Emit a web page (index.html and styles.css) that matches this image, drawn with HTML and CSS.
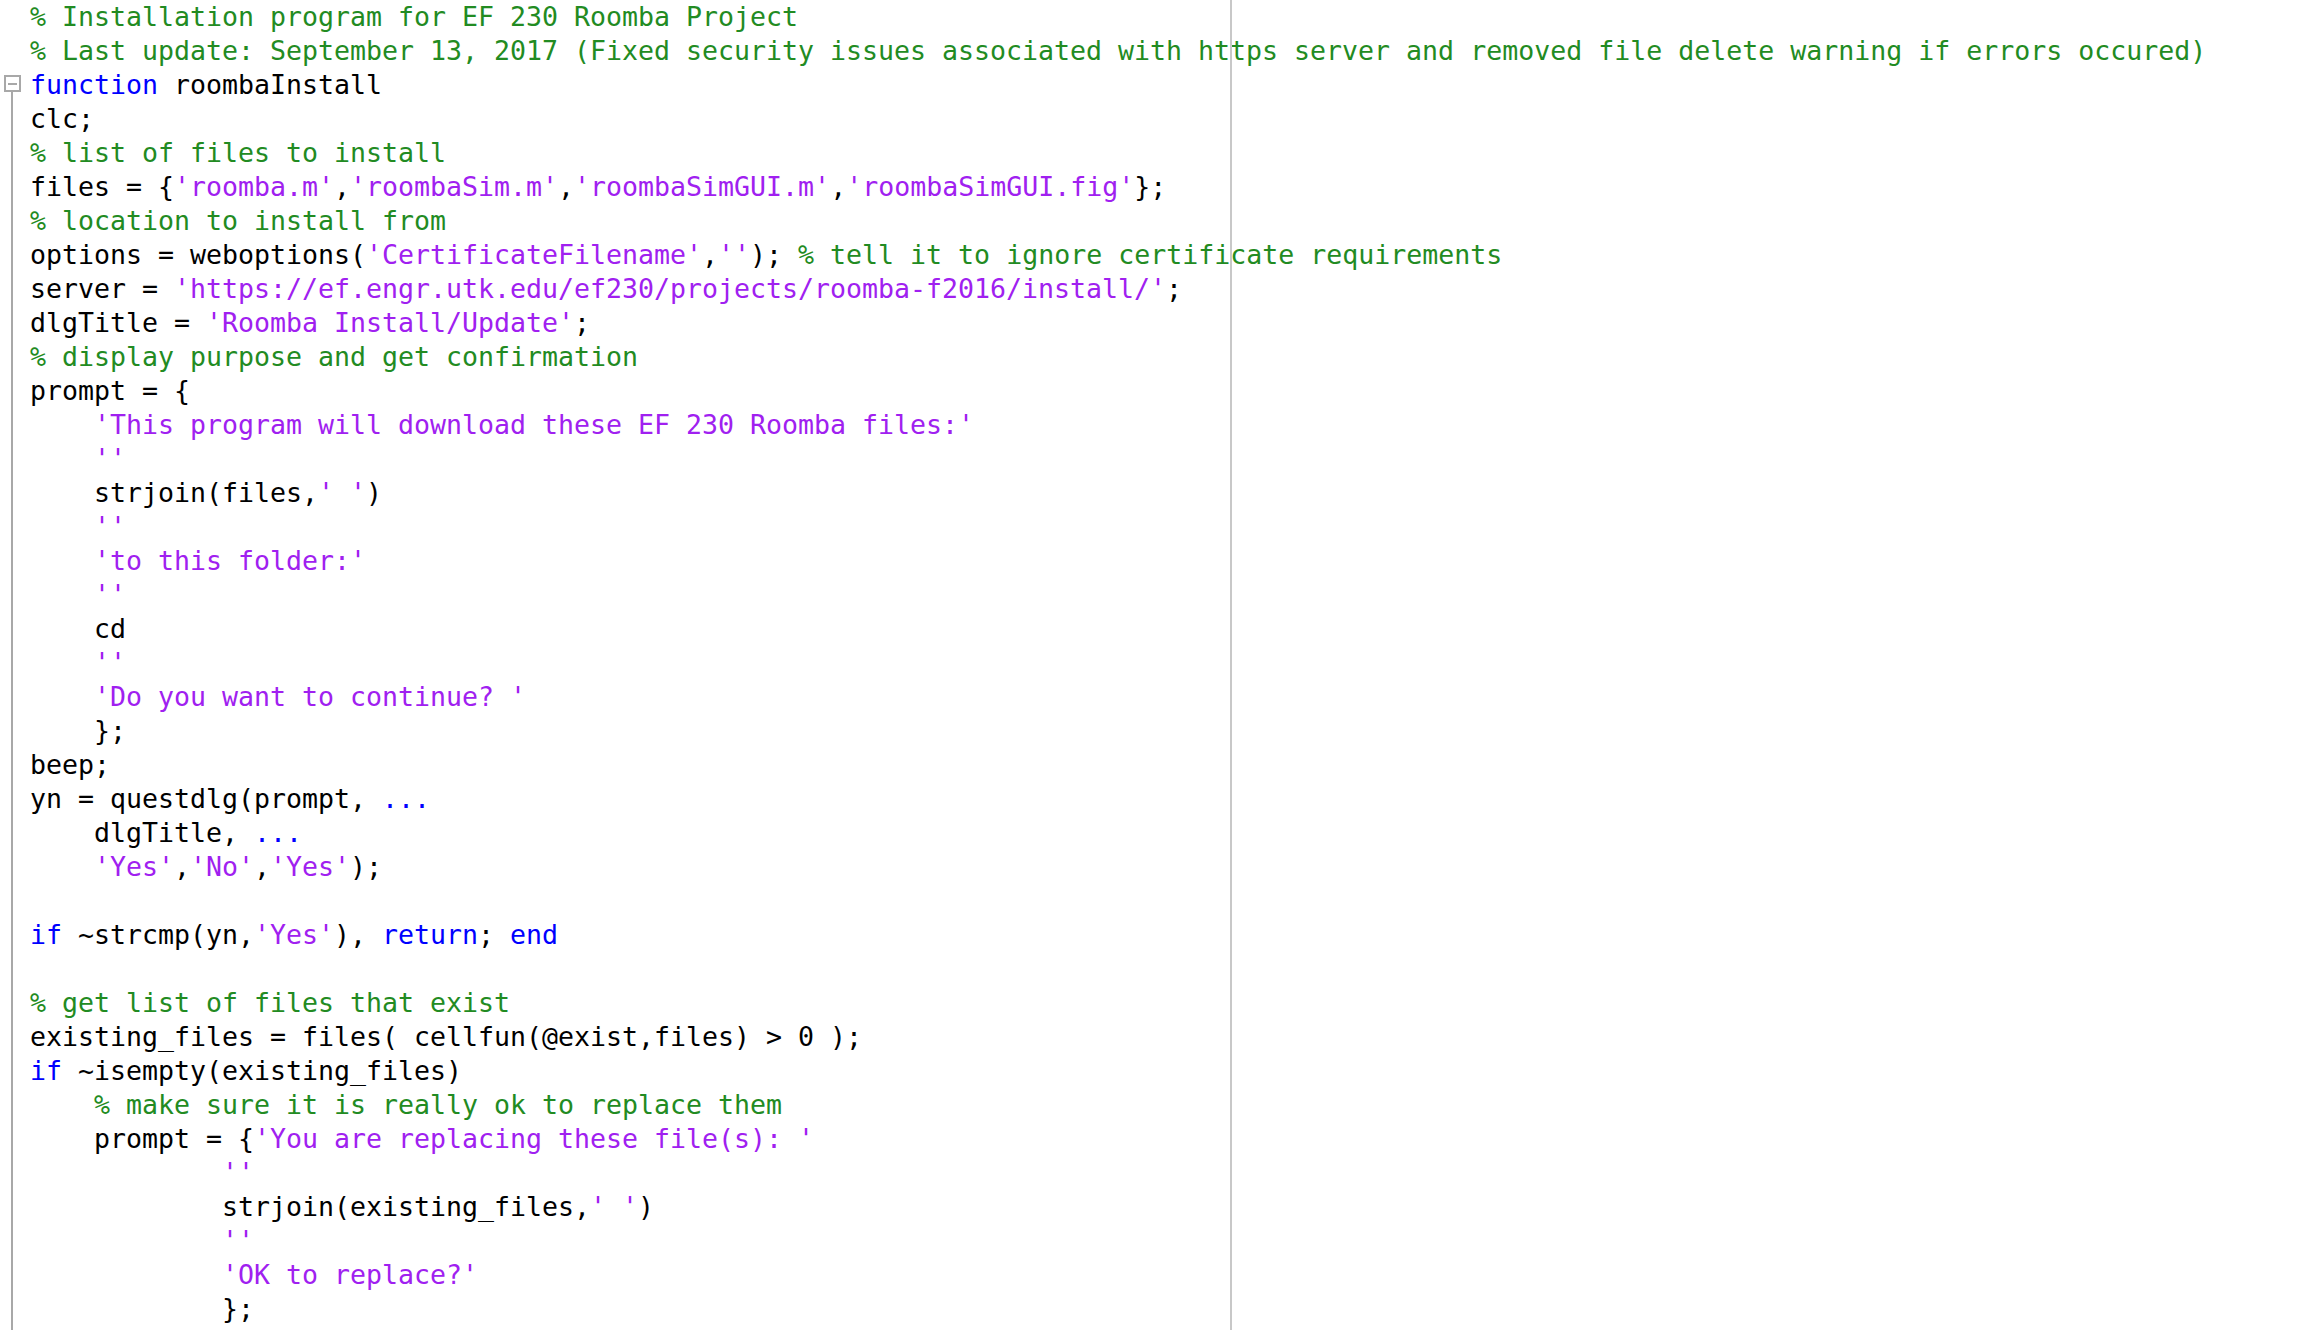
FILE: index.html
```html
<!DOCTYPE html>
<html lang="en">
<head>
<meta charset="utf-8">
<title>roombaInstall.m</title>
<link rel="stylesheet" href="styles.css">
</head>
<body>
<div class="editor">
  <div class="gutter">
    <div class="gutter-spacer"></div>
    <div class="fold-box"><div class="fold-minus"></div></div>
    <div class="fold-line"></div>
  </div>
  <div class="code">
<div class="ln"><span class="c">% Installation program for EF 230 Roomba Project</span></div>
<div class="ln"><span class="c">% Last update: September 13, 2017 (Fixed security issues associated with https server and removed file delete warning if errors occured)</span></div>
<div class="ln"><span class="k">function</span> roombaInstall</div>
<div class="ln">clc;</div>
<div class="ln"><span class="c">% list of files to install</span></div>
<div class="ln">files = {<span class="s">'roomba.m'</span>,<span class="s">'roombaSim.m'</span>,<span class="s">'roombaSimGUI.m'</span>,<span class="s">'roombaSimGUI.fig'</span>};</div>
<div class="ln"><span class="c">% location to install from</span></div>
<div class="ln">options = weboptions(<span class="s">'CertificateFilename'</span>,<span class="s">''</span>); <span class="c">% tell it to ignore certificate requirements</span></div>
<div class="ln">server = <span class="s">'https://ef.engr.utk.edu/ef230/projects/roomba-f2016/install/'</span>;</div>
<div class="ln">dlgTitle = <span class="s">'Roomba Install/Update'</span>;</div>
<div class="ln"><span class="c">% display purpose and get confirmation</span></div>
<div class="ln">prompt = {</div>
<div class="ln">    <span class="s">'This program will download these EF 230 Roomba files:'</span></div>
<div class="ln">    <span class="s">''</span></div>
<div class="ln">    strjoin(files,<span class="s">' '</span>)</div>
<div class="ln">    <span class="s">''</span></div>
<div class="ln">    <span class="s">'to this folder:'</span></div>
<div class="ln">    <span class="s">''</span></div>
<div class="ln">    cd</div>
<div class="ln">    <span class="s">''</span></div>
<div class="ln">    <span class="s">'Do you want to continue? '</span></div>
<div class="ln">    };</div>
<div class="ln">beep;</div>
<div class="ln">yn = questdlg(prompt, <span class="k">...</span></div>
<div class="ln">    dlgTitle, <span class="k">...</span></div>
<div class="ln">    <span class="s">'Yes'</span>,<span class="s">'No'</span>,<span class="s">'Yes'</span>);</div>
<div class="ln"> </div>
<div class="ln"><span class="k">if</span> ~strcmp(yn,<span class="s">'Yes'</span>), <span class="k">return</span>; <span class="k">end</span></div>
<div class="ln"> </div>
<div class="ln"><span class="c">% get list of files that exist</span></div>
<div class="ln">existing_files = files( cellfun(@exist,files) &gt; 0 );</div>
<div class="ln"><span class="k">if</span> ~isempty(existing_files)</div>
<div class="ln">    <span class="c">% make sure it is really ok to replace them</span></div>
<div class="ln">    prompt = {<span class="s">'You are replacing these file(s): '</span></div>
<div class="ln">            <span class="s">''</span></div>
<div class="ln">            strjoin(existing_files,<span class="s">' '</span>)</div>
<div class="ln">            <span class="s">''</span></div>
<div class="ln">            <span class="s">'OK to replace?'</span></div>
<div class="ln">            };</div>
  </div>
  <div class="margin-line"></div>
</div>
</body>
</html>
```
FILE: styles.css
```css
html, body {
  margin: 0;
  padding: 0;
  background: #ffffff;
}

.editor {
  position: relative;
  display: flex;
  height: 1330px;
  overflow: hidden;
  background: #ffffff;
}

.gutter {
  width: 30px;
  flex: 0 0 30px;
  display: flex;
  flex-direction: column;
}

.gutter-spacer {
  height: 75px;
  flex: 0 0 75px;
}

.fold-box {
  box-sizing: border-box;
  margin-left: 4px;
  width: 17px;
  height: 17px;
  flex: 0 0 17px;
  border: 2px solid #a8a8a8;
  display: flex;
  align-items: center;
  justify-content: center;
}

.fold-minus {
  width: 9px;
  height: 2px;
  background: #a8a8a8;
}

.fold-line {
  flex: 1 1 auto;
  width: 2px;
  margin-left: 11px;
  background: #a8a8a8;
}

.code {
  flex: 1 1 auto;
  font-family: "DejaVu Sans Mono", "Liberation Mono", monospace;
  font-size: 26.58px;
  line-height: 34px;
  color: #000000;
}

.ln {
  white-space: pre;
  height: 34px;
}

.c {
  color: #228b22;
}

.k {
  color: #0000ff;
}

.s {
  color: #a020f0;
}

.margin-line {
  position: absolute;
  top: 0;
  bottom: 0;
  left: 1230px;
  width: 2px;
  background: #c8c8c8;
}
```
